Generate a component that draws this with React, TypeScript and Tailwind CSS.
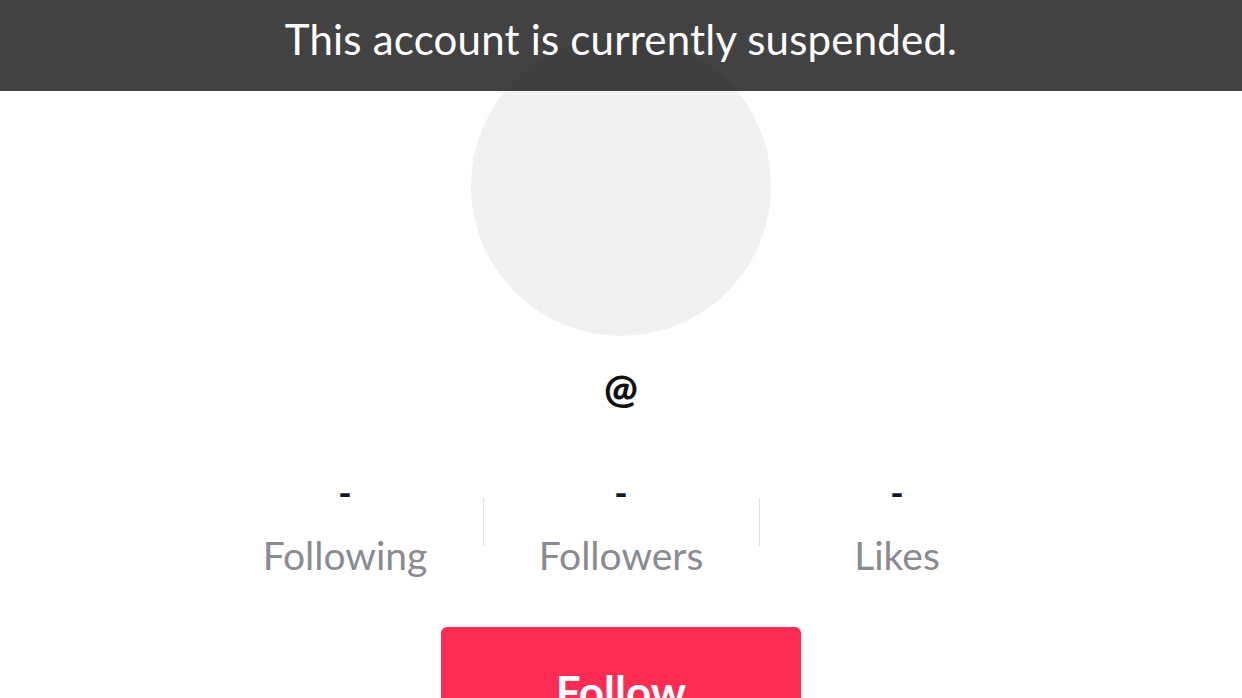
import React from "react";

export default function App() {
  const stats = [
    { label: "Following" },
    { label: "Followers" },
    { label: "Likes" },
  ];
  return (
    <div
      className="relative w-[1242px] h-[698px] overflow-hidden bg-white"
      style={{ fontFamily: "Lato, 'Open Sans', sans-serif" }}
    >
      <div className="flex flex-col items-center">
        <div className="mt-[36px] w-[300px] h-[300px] rounded-full bg-[#f1f1f1]" />
        <div className="mt-[30px] h-[44px] flex items-center justify-center text-[40px] font-black text-[#111] leading-none">
          @
        </div>
        <div className="mt-[62px] flex w-[828px]">
          {stats.map((s, i) => (
            <div key={s.label} className="relative flex-1 flex flex-col items-center">
              {i > 0 && (
                <div className="absolute left-0 top-[26px] h-[48px] w-px bg-[#e3e3e3]" />
              )}
              <div className="h-[40px] flex items-center text-[36px] font-bold text-[#161823] leading-none">-</div>
              <div className="mt-[24px] text-[39px] text-[#8a8b91] leading-none">{s.label}</div>
            </div>
          ))}
        </div>
        <button className="mt-[52px] w-[360px] h-[90px] rounded-[6px] bg-[#fe2c55] text-white text-[44px] font-bold flex items-start justify-center pt-[42px] leading-none">
          Follow
        </button>
      </div>
      <div className="absolute top-0 left-0 right-0 h-[91px] bg-black/[0.74] flex justify-center">
        <span className="mt-[15px] text-white text-[42px] leading-[48px] tracking-[0.2px]">
          This account is currently suspended.
        </span>
      </div>
    </div>
  );
}
